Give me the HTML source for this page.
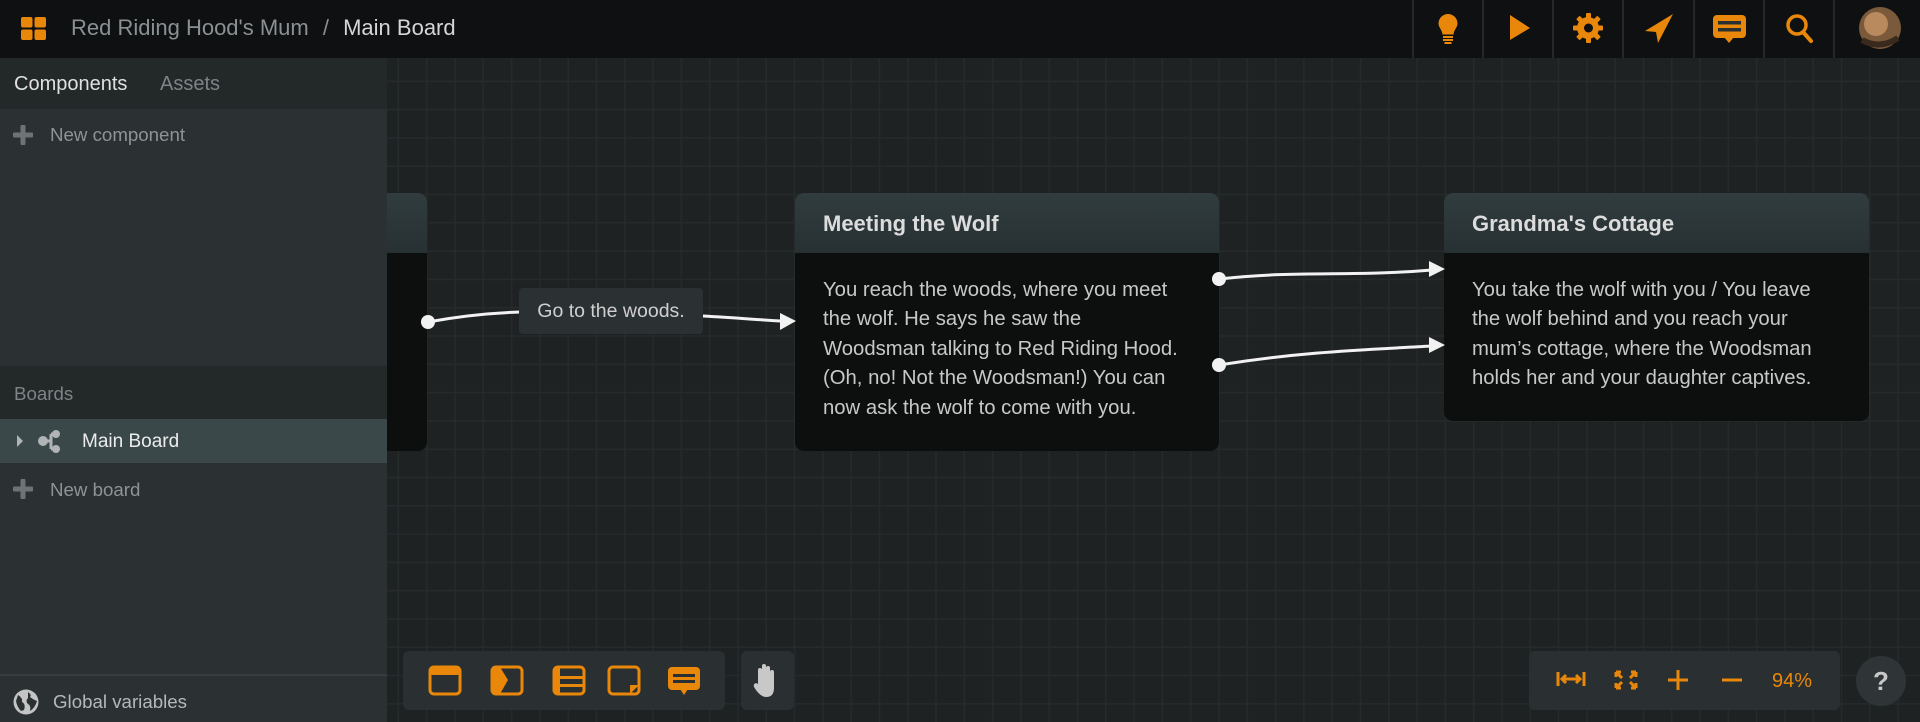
<!DOCTYPE html>
<html><head><meta charset="utf-8"><style>
*{margin:0;padding:0;box-sizing:border-box}
body{width:1920px;height:722px;overflow:hidden;background:#1e2122;font-family:"Liberation Sans","DejaVu Sans",sans-serif;position:relative}
.abs{position:absolute}
#canvas{left:387px;top:58px;width:1533px;height:664px;background-color:#1f2223;
background-image:linear-gradient(to right,#262a2b 1.5px,transparent 1.5px),linear-gradient(to bottom,#262a2b 1.5px,transparent 1.5px);
background-size:28.3px 28.3px;background-position:-385.5px -34px}
#top{left:0;top:0;width:1920px;height:58px;background:#0e1011}
.sep{top:0;width:2px;height:58px;background:#23292b}
.node{background:#0d0f0f;border-radius:9px;overflow:hidden}
.nh{height:60px;background:linear-gradient(#313c3e,#273133);color:#dcdcdc;font-size:22px;font-weight:bold;padding:18px 0 0 28px}
.nb{color:#c8c8c8;font-size:20.3px;line-height:29.4px;padding:23px 0 0 28px;white-space:nowrap}
.side{left:0;width:387px}
.st{color:#8e9496;font-size:18.7px}
.bar{background:#2a3032;border-radius:6px}
</style></head><body>
<div id="canvas" class="abs"></div>

<div class="abs node" style="left:360px;top:193px;width:67px;height:258px"><div class="nh" style="padding:0"></div></div>
<div class="abs node" style="left:795px;top:193px;width:424px;height:258px">
<div class="nh">Meeting the Wolf</div>
<div class="nb">You reach the woods, where you meet<br>the wolf. He says he saw the<br>Woodsman talking to Red Riding Hood.<br>(Oh, no! Not the Woodsman!) You can<br>now ask the wolf to come with you.</div></div>
<div class="abs node" style="left:1444px;top:193px;width:425px;height:228px">
<div class="nh">Grandma's Cottage</div>
<div class="nb">You take the wolf with you / You leave<br>the wolf behind and you reach your<br>mum’s cottage, where the Woodsman<br>holds her and your daughter captives.</div></div>

<svg class="abs" style="left:0;top:0" width="1920" height="722">
<g fill="none" stroke="#f2f2f2" stroke-width="3">
<path d="M428 322 C460 316 490 313 520 312"/>
<path d="M703 316 C740 318 760 320 782 321"/>
<path d="M1219 279 C1300 270 1350 277 1432 270"/>
<path d="M1219 365 C1300 352 1360 350 1432 346"/>
</g>
<g fill="#f2f2f2">
<circle cx="428" cy="322" r="7"/><circle cx="1219" cy="279" r="7"/><circle cx="1219" cy="365" r="7"/>
<path d="M780 313 L796 321 L780 330Z"/><path d="M1429 261 L1445 269 L1429 277Z"/><path d="M1429 337 L1445 345 L1429 353Z"/>
</g></svg>
<div class="abs" style="left:519px;top:288px;width:184px;height:46px;background:#2b3133;border-radius:4px;color:#cfcfcf;font-size:19.5px;line-height:46px;text-align:center">Go to the woods.</div>

<div id="top" class="abs">
<svg class="abs" style="left:21px;top:17px" width="26" height="24"><g fill="#e8870a"><rect x="0" y="0" width="11.5" height="10.5" rx="2"/><rect x="13.5" y="0" width="11.5" height="10.5" rx="2"/><rect x="0" y="12.5" width="11.5" height="10.5" rx="2"/><rect x="13.5" y="12.5" width="11.5" height="10.5" rx="2"/></g></svg>
<div class="abs" style="left:71px;top:15px;font-size:22px;color:#8b9193">Red Riding Hood's Mum <span style="margin:0 8px;color:#8b9193">/</span> <span style="color:#d6d6d6">Main Board</span></div>
<div class="abs sep" style="left:1412px"></div><div class="abs sep" style="left:1482px"></div><div class="abs sep" style="left:1552px"></div><div class="abs sep" style="left:1622px"></div><div class="abs sep" style="left:1693px"></div><div class="abs sep" style="left:1763px"></div><div class="abs sep" style="left:1833px"></div>
<svg class="abs" style="left:0;top:0" width="1920" height="58"><g fill="#e8870a">
<path d="M1448 14 a9.5 9.5 0 0 1 9.5 9.5 c0 4 -3.5 6 -4 11 h-11 c-0.5 -5 -4 -7 -4 -11 a9.5 9.5 0 0 1 9.5 -9.5z"/><rect x="1443" y="36" width="10" height="2"/><rect x="1443" y="39" width="10" height="2"/><rect x="1444.5" y="42" width="7" height="2"/>
<path d="M1510 15 L1530 28 L1510 40Z"/>
<circle cx="1588" cy="28" r="11"/>
<path d="M1673 14 L1645 31 L1656 32 L1658 43 Z"/>
<rect x="1713" y="15" width="33" height="23" rx="4"/><path d="M1724 37 L1729 43 L1734 37Z"/>
</g>
<g fill="#e8870a"><rect x="1586" y="13" width="5" height="30" rx="1"/><rect x="1573" y="25.5" width="30" height="5" rx="1"/><rect x="1586" y="13" width="5" height="30" rx="1" transform="rotate(45 1588.5 28)"/><rect x="1586" y="13" width="5" height="30" rx="1" transform="rotate(-45 1588.5 28)"/></g>
<circle cx="1588.5" cy="28" r="4.5" fill="#0e1011"/>
<rect x="1718" y="21" width="23" height="3.5" fill="#2a3032"/><rect x="1718" y="28" width="23" height="3.5" fill="#2a3032"/>
<circle cx="1797" cy="25" r="9" fill="none" stroke="#e8870a" stroke-width="3.5"/><path d="M1803 32 L1811 41" stroke="#e8870a" stroke-width="4" stroke-linecap="round"/>
<circle cx="1880" cy="28" r="21" fill="#7a5a3a"/><circle cx="1876" cy="24" r="12" fill="#b98a5e"/><path d="M1862 40 Q1880 50 1898 38" stroke="#3a2a1e" stroke-width="6" fill="none"/>
</svg>
</div>

<div class="abs side" style="top:58px;height:51px;background:#232829"></div>
<div class="abs" style="left:14px;top:73px;font-size:20px;color:#e0e0e0">Components</div>
<div class="abs" style="left:160px;top:73px;font-size:20px;color:#7e8486">Assets</div>
<div class="abs side" style="top:109px;height:257px;background:#2b3133"></div>
<svg class="abs" style="left:13px;top:125px" width="20" height="20"><rect x="7.5" y="0" width="5" height="20" rx="1" fill="#6e7476"/><rect x="0" y="7.5" width="20" height="5" rx="1" fill="#6e7476"/></svg>
<div class="abs st" style="left:50px;top:124px">New component</div>
<div class="abs side" style="top:366px;height:53px;background:#232829"></div>
<div class="abs st" style="left:14px;top:383px;color:#7e8486">Boards</div>
<div class="abs side" style="top:419px;height:44px;background:#3b4849"></div>
<svg class="abs" style="left:15px;top:429px" width="60" height="26"><path d="M2 6 L8 12 L2 18Z" fill="#b0b4b5"/><g fill="#b0b4b5"><circle cx="28" cy="12" r="5"/><circle cx="41" cy="5" r="4"/><circle cx="41" cy="20" r="4"/></g><path d="M28 12 H36 M36 5 V20 M36 5 H41 M36 20 H41" stroke="#b0b4b5" stroke-width="3" fill="none"/></svg>
<div class="abs" style="left:82px;top:431px;font-size:19px;color:#ececec">Main Board</div>
<div class="abs side" style="top:463px;height:259px;background:#2b3133"></div>
<svg class="abs" style="left:13px;top:479px" width="20" height="20"><rect x="7.5" y="0" width="5" height="20" rx="1" fill="#6e7476"/><rect x="0" y="7.5" width="20" height="5" rx="1" fill="#6e7476"/></svg>
<div class="abs st" style="left:50px;top:479px">New board</div>
<div class="abs side" style="top:674px;height:2px;background:#353d3f"></div>
<svg class="abs" style="left:13px;top:689px" width="26" height="26"><circle cx="13" cy="13" r="12.5" fill="#c4c4c4"/><path d="M5 6 Q10 9 9 13 Q13 15 11 21 L8 22 Q4 18 3 12Z M15 3 Q19 6 17 8 Q21 11 24 12 Q22 19 17 22 Q18 16 15 15 Q12 12 15 9Z" fill="#2b3133"/></svg>
<div class="abs st" style="left:53px;top:691px;color:#b4b8b9">Global variables</div>

<div class="abs bar" style="left:403px;top:651px;width:322px;height:59px"></div>
<div class="abs bar" style="left:741px;top:651px;width:53px;height:59px"></div>
<svg class="abs" style="left:0;top:640px" width="900" height="82">
<g fill="none" stroke="#e8870a" stroke-width="3">
<rect x="430" y="27" width="30" height="27" rx="4"/><rect x="492" y="27" width="30" height="27" rx="4"/><rect x="554" y="27" width="30" height="27" rx="4"/><rect x="609" y="27" width="30" height="27" rx="4"/>
</g>
<g fill="#e8870a"><rect x="430" y="27" width="30" height="8" rx="3"/>
<path d="M492 27 H500 L508 40 L500 54 H492Z"/>
<rect x="554" y="27" width="6" height="27"/><rect x="560" y="36" width="24" height="3"/><rect x="560" y="44" width="24" height="3"/>
<path d="M630 54 L639 45 H630Z"/>
<rect x="668" y="27" width="32" height="23" rx="4"/><path d="M680 49 L684 55 L688 49Z"/></g>
<rect x="673" y="34" width="22" height="3" fill="#2a3032"/><rect x="673" y="40" width="22" height="3" fill="#2a3032"/>
<path d="M758 44 L758 30 a2 2 0 0 1 4 0 V40 V26 a2 2 0 0 1 4 0 V40 V28 a2 2 0 0 1 4 0 V41 V32 a2 2 0 0 1 4 0 V48 Q774 57 766 57 Q760 57 754 47 Q753 44 756 43Z" fill="#c8c8c8"/>
</svg>

<div class="abs bar" style="left:1529px;top:651px;width:311px;height:59px"></div>
<svg class="abs" style="left:1520px;top:640px" width="400" height="82"><g stroke="#e8870a" stroke-width="3" fill="none">
<path d="M38 32 V46 M64 32 V46 M42 39 H60 M46 35 L42 39 L46 43 M56 35 L60 39 L56 43"/>
<path d="M96 32 L102 38 M96 32 H101 M96 32 V37 M116 32 L110 38 M116 32 H111 M116 32 V37 M96 48 L102 42 M96 48 H101 M96 48 V43 M116 48 L110 42 M116 48 H111 M116 48 V43"/>
<path d="M148 40 H168 M158 30 V50"/>
<path d="M202 40 H222"/></g>
<text x="252" y="47" font-size="20" fill="#e8870a" font-family="Liberation Sans,sans-serif">94%</text>
<circle cx="361" cy="41" r="25" fill="#2f3537"/>
<text x="361" y="50" font-size="26" font-weight="bold" fill="#c8c8c8" text-anchor="middle" font-family="Liberation Sans,sans-serif">?</text>
</svg>
</body></html>
